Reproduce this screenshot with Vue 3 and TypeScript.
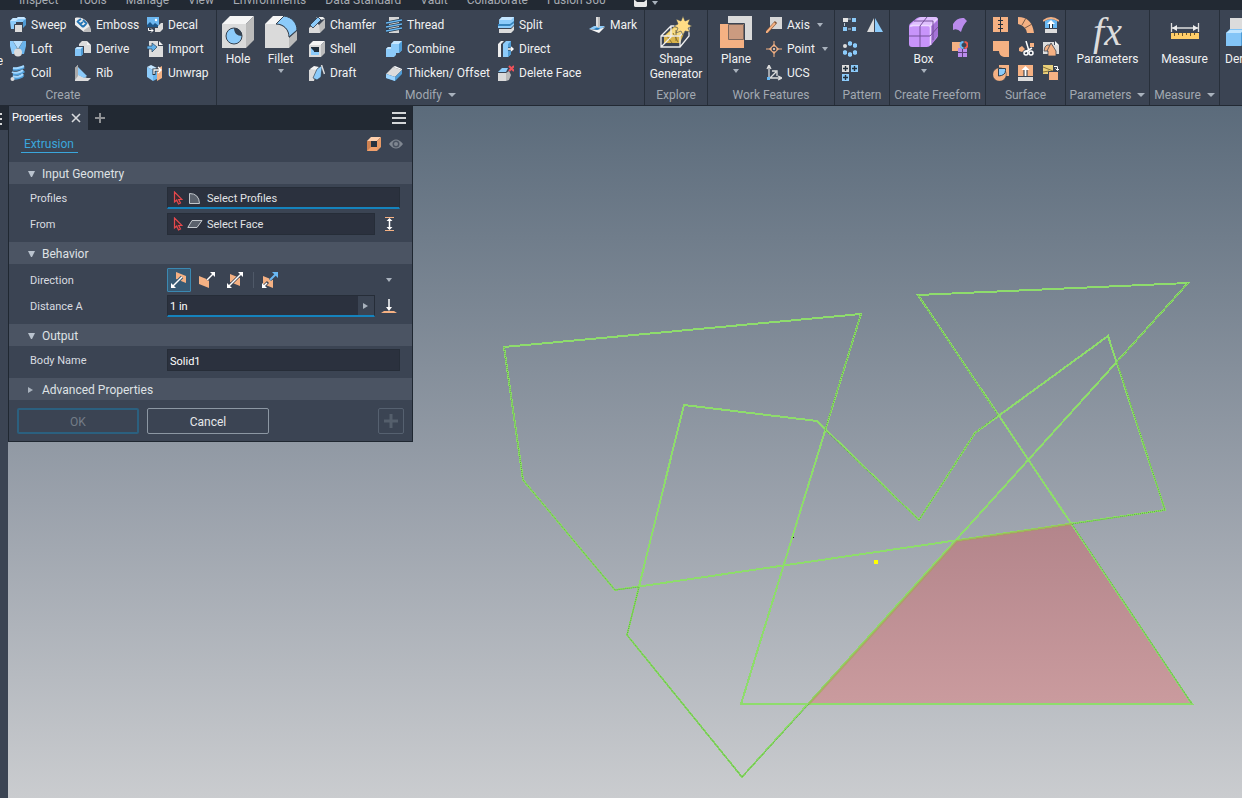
<script setup lang="ts">
import { ref } from 'vue'

interface Tool { icon: string; label?: string; caret?: boolean }

const tabs = ['Inspect', 'Tools', 'Manage', 'View', 'Environments', 'Data Standard', 'Vault', 'Collaborate', 'Fusion 360']

const createTools: Tool[][] = [
  [{ icon: 'sweep', label: 'Sweep' }, { icon: 'loft', label: 'Loft' }, { icon: 'coil', label: 'Coil' }],
  [{ icon: 'emboss', label: 'Emboss' }, { icon: 'derive', label: 'Derive' }, { icon: 'rib', label: 'Rib' }],
  [{ icon: 'decal', label: 'Decal' }, { icon: 'import', label: 'Import' }, { icon: 'unwrap', label: 'Unwrap' }],
]
const modifyTools: Tool[][] = [
  [{ icon: 'chamfer', label: 'Chamfer' }, { icon: 'shell', label: 'Shell' }, { icon: 'draft', label: 'Draft' }],
  [{ icon: 'thread', label: 'Thread' }, { icon: 'combine', label: 'Combine' }, { icon: 'thicken', label: 'Thicken/ Offset' }],
  [{ icon: 'split', label: 'Split' }, { icon: 'direct', label: 'Direct' }, { icon: 'deleteFace', label: 'Delete Face' }],
  [{ icon: 'mark', label: 'Mark' }],
]
const workTools: Tool[] = [
  { icon: 'axis', label: 'Axis', caret: true },
  { icon: 'point', label: 'Point', caret: true },
  { icon: 'ucs', label: 'UCS' },
]
const patternTools: string[][] = [['rectPattern', 'circPattern', 'sketchPattern'], ['mirror']]
const freeformTools = ['face', 'convert']
const surfaceTools: string[][] = [
  ['stitch', 'patch', 'sculpt'],
  ['ruled', 'trim', 'extend'],
  ['replace', 'repair', 'fitMesh'],
]
const directions = ['dirDefault', 'dirFlipped', 'dirSymmetric', 'dirAsymmetric']

const direction = ref('dirDefault')
const distance = ref('1 in')
const bodyName = ref('Solid1')

const icons: Record<string, string> = {
  sweep: '<path fill="#8ccbfa" d="M0 4 3 1h4l1-1h6l2 2v5h-3V5H6v7H1z"/><path fill="#c5e6ff" d="M0 4 3 1h4l1-1h6l2 2H8L6 4z"/><path fill="#4f9bd4" d="M13 4l3-2v6l-3 3z"/><path fill="#dcdcdc" stroke="#3b4453" d="M4.500 7.500h8v8h-8z"/>',
  loft: '<path fill="#8ccbfa" d="M0 0h3l4 7-3 6H2L0 5z"/><path fill="#6ab4ec" d="M16 0h-3L9 7l3 6h2l2-8z"/><path fill="#b9e0fd" d="M3 0h10L8 8z"/><circle cx="8" cy="11.500" r="4" fill="#dcdcdc"/>',
  coil: '<path fill="none" stroke="#4f9fda" stroke-width="3" d="M3 4c3 1 9-1 11-2M3 9c3 1 9-1 11-3M3 13c3 1 9-1 10-3"/><path fill="none" stroke="#a3d8ff" stroke-width="2" d="M3 3c3 1 9-1 11-2M2 7c3 2 9 0 11-2M3 11c3 2 9 0 10-2"/><circle cx="2.500" cy="14" r="2" fill="#dcdcdc"/>',
  emboss: '<path fill="#ececec" d="M0 8V1C8-1 15 5 16 15H9z"/><path fill="none" stroke="#2375b5" stroke-width="1.800" d="M2 4l6 6M3 4l3-2M5 7l3-2M8 10l3-3M8 3l4 4"/><path fill="#bcbcbc" d="M9 13l6-4 1 6H9z"/>',
  derive: '<path fill="#dcdcdc" d="M7 0h5v4h4v8H9V5H4V3z"/><path fill="#f4f4f4" d="M12 0l4 4h-4z"/><path fill="#83c5f7" d="M0 8l2-2h6v7l-2 2H0z"/><path fill="#c0e5ff" d="M0 8l2-2h6L6 8z"/><path fill="#4e9cd6" d="M6 8l2-2v7l-2 2z"/>',
  rib: '<path fill="#dcdcdc" d="M0 3l3-3v9l9 4h4l-3 3H0z"/><path fill="#3b4453" d="M4 4v6l6 3z"/><path fill="#8ccbfa" d="M3 2l9 9-3 2-6-3z"/><path fill="#aaa" d="M0 3l3-3v11l-3 4z"/>',
  decal: '<path fill="#6bb6ef" d="M0 0h12v10H0z"/><path fill="#1e5687" d="M0 8l3-3 3 3 2-2 4 3v1H0z"/><circle cx="9" cy="3" r="1.200" fill="#fff"/><path fill="#dcdcdc" d="M11 9l3-3h2v6l-3 3H8v-4h3z"/><path fill="none" stroke="#3b4453" stroke-width="3" d="M1.500 10.500v3H6"/><path fill="none" stroke="#fff" d="M1.500 11v2.500H6M4 11.500l2 2-2 2"/>',
  import: '<path fill="#dcdcdc" d="M2 0h9v5h5v11H2z"/><path fill="#f4f4f4" d="M12 0l4 4h-4z"/><path fill="#62b1ea" stroke="#28435a" stroke-width=".7" d="M0 5h5V2l5 4-5 5V8H0z"/>',
  unwrap: '<path fill="#f3b184" d="M10 4l5-3v12l-5 3z"/><path fill="#8ccbfa" d="M0 2l6 3v11l-6-4z"/><path fill="#6ab4ec" d="M6 5l4-1v10l-4 2z"/><path fill="#c5e6ff" d="M0 2l4-2 6 3-4 2z"/><path fill="none" stroke="#26303b" stroke-width="3" d="M7 10V5h6"/><path fill="none" stroke="#fff" stroke-width="1.300" d="M7 9V5h6M11 2l3 3-3 3"/>',
  hole: '<path fill="#dadada" d="M0 8h24v24H0z"/><path fill="#f5f5f5" d="M0 8l8-8h24l-8 8z"/><path fill="#bbb" d="M24 8l8-8v24l-8 8z"/><circle cx="12" cy="20" r="8" fill="#8ccbfa" stroke="#35414f"/><path fill="#35414f" d="M12 12a8 8 0 0 1 8 8c-5 0-8-3-8-8z"/>',
  fillet: '<path fill="#f5f5f5" d="M0 8l8-8h12l-6 8z"/><path fill="#dadada" d="M0 8h11c8 1 13 6 13 13v11H0z"/><path fill="#bbb" d="M24 22l8-7v9l-8 8z"/><path fill="#8ccbfa" stroke="#35414f" d="M11 8l8-8c8 1 13 7 13 14l-8 7c0-7-5-13-13-13z"/>',
  chamfer: '<path fill="#dadada" d="M0 11l7-6 4 4v7H0z"/><path fill="#bbb" d="M10 8l6-6v9l-5 5z"/><path fill="#eee" d="M7 0h7l2 2-5 1z"/><path fill="#8ccbfa" stroke="#273443" stroke-width=".8" d="M1 8l8-8 3 3-8 8z"/>',
  shell: '<path fill="#dadada" d="M0 4h12v12H0z"/><path fill="#f5f5f5" d="M0 4l4-4h12l-4 4z"/><path fill="#bbb" d="M12 4l4-4v12l-4 4z"/><path fill="#1f2d3a" d="M2 6h8v8H2z"/><path fill="#8ccbfa" d="M2 14V7l3 3v1h5v3z"/>',
  draft: '<path fill="#dadada" d="M0 5l5-3 3 2-3 12H0z"/><path fill="#f5f5f5" d="M1 4l4-3 5 1-2 3z"/><path fill="#8ccbfa" stroke="#26303b" stroke-width=".6" d="M8 4l4-3 1 1-1 10-4 3-4-2z"/><path stroke="#ddd" stroke-width="1.500" d="M12.500 0l3 9"/>',
  thread: '<path fill="#d5d5d5" d="M3 0h10v16H3z"/><path fill="none" stroke="#23384b" stroke-width="3" d="M0 6l16-3M0 10l16-3M0 14l16-3"/><path fill="none" stroke="#69b8f3" stroke-width="1.700" d="M0 6l16-3M0 10l16-3M0 14l16-3"/>',
  combine: '<path fill="#8ccbfa" d="M5 3l3-3h8v9l-3 3h-3v2l-2 2H0V8l2-2h3z"/><path fill="#c5e6ff" d="M5 3l3-3h8l-3 3zM0 8l2-2h3v2z"/><path fill="#4e9cd6" d="M13 3l3-3v9l-3 3z"/>',
  thicken: '<path fill="#dcdcdc" d="M0 9l7-7 9 3-7 7z"/><path fill="#fff" d="M7 2l2-1 7 3v1z"/><path fill="#4e9cd6" d="M0 9l9 3 7-7v4l-7 7-9-3z"/><path fill="#9dd5ff" d="M0 9l9 3v4l-9-3z"/>',
  split: '<path fill="#8ccbfa" d="M1 3l3-3h12v5l-3 3H1z"/><path fill="#c5e6ff" d="M1 3l3-3h12l-3 3z"/><path fill="#3583bc" d="M0 7h12l4-3v2l-3 3H0z"/><path fill="#8ccbfa" d="M0 9h12l4-3v2l-3 3H0z"/><path fill="#dcdcdc" d="M1 12h12l3-3v4l-3 3H1z"/>',
  direct: '<path fill="#eee" d="M0 3l3-3h3L3 3v13H0z"/><path fill="#8ccbfa" d="M5 3l3-3h5v13l-3 3H5z"/><path fill="#4e9cd6" d="M10 3l3-3v13l-3 3z"/><path fill="none" stroke="#293440" stroke-width="3" d="M10 8h5"/><path fill="none" stroke="#fff" stroke-width="1.400" d="M10 8h5M13 6l2 2-2 2"/>',
  deleteFace: '<path fill="#dadada" d="M0 8h8v8H0z"/><path fill="#8ccbfa" d="M0 7l4-4h6L8 7z"/><path fill="#bbb" d="M8 8l3-2 2 4-2 5-3 1z"/><path stroke="#f0525a" stroke-width="2" d="M11 1l5 5M16 1l-5 5"/>',
  mark: '<path fill="#8ccbfa" d="M0 12l5-3h11l-5 4z"/><path fill="#f5f5f5" d="M0 12l7 1 4-1 5-2-6 6z"/><path fill="#257ab9" d="M5 12l4-2 2 2-3 1z"/><path fill="#ddd" d="M7 0h4v9l-2 2-2-2z"/><path fill="#bbb" d="M9 0h2v9l-2 2z"/>',
  shape: '<path fill="#d9b44b" d="M4 20l11-10h12l-7 17H4z"/><path fill="#f6db82" d="M5 20l9-8h11l-5 7z"/><path fill="none" stroke="#8a7130" d="M7 20l5 7M13 17l5 9M16 14v11"/><path fill="none" stroke="#eee" stroke-width="1.300" d="M1 20l10-10h18v10l-9 11H1zM1 20h19l9-10M20 20v11M11 10v11L1 31"/><path fill="#ffdd85" stroke="#3b4453" stroke-width=".6" d="M23 0l2 5 5-2-2 5 4 2-4 2 2 4-5-1-2 4-2-4-5 2 2-5-4-2 4-2-2-5 5 2z"/>',
  plane: '<path fill="#dadada" d="M8 0h24v24H8z"/><path fill="#f5b183" stroke="#3b4453" d="M-.500 7.500h25v25h-25z"/><path fill="#cb9b80" stroke="#7d685e" d="M8.500 8.500h15v15h-15z"/>',
  axis: '<path fill="#d7d7d7" d="M4 0h12v12H4z"/><path stroke="#7d5133" stroke-width="3" d="M0 16L10 5"/><path stroke="#f5b183" stroke-width="2" d="M0 16L9 6"/>',
  point: '<path stroke="#f5b183" d="M8 0v16M0 8h16"/><path fill="#f5b183" d="M8 3l5 5-5 5-5-5z"/><circle cx="8" cy="8" r="2.500" fill="#3b4453"/><circle cx="8" cy="8" r="1" fill="#ffe3cf"/>',
  ucs: '<path fill="none" stroke="#ddd" stroke-width="1.300" d="M3 13V1M1 4l2-4 2 4M3 13h12M12 11l4 2-4 2M4 13l6-6M6 6h5v5"/><path fill="#69b8f3" d="M1 12h3v3H1z"/>',
  rectPattern: '<path fill="#e5e5e5" d="M1 1h5v4H1z"/><path fill="#8ccbfa" d="M10 1h4v4h-4zM1 10h4v4H1zM10 10h4v4h-4z"/><path stroke="#b8c7d4" d="M6 2h3M2.500 6v3M6 12h3"/>',
  circPattern: '<path fill="#8ccbfa" d="M6 1l2-1 2 1v3L8 5 6 4zM11 3l2-1 2 1v3l-2 1-2-1zM11 10l2-1 2 1v3l-2 1-2-1zM6 12l2-1 2 1v3l-2 1-2-1zM1 10l2-1 2 1v3l-2 1-2-1z"/><circle cx="3" cy="5" r="2" fill="#ddd"/>',
  sketchPattern: '<path fill="#ddd" d="M0 0h7v7H0z"/><path fill="#8ccbfa" d="M9 0h7v7H9zM0 9h7v7H0z"/><path stroke="#23313e" stroke-width="1.400" d="M1 3.500h5M3.500 1v5M10 3.500h5M12.500 1v5M1 12.500h5M3.500 10v5"/>',
  mirror: '<path fill="#dcdcdc" d="M7 1v14H0z"/><path fill="#8ccbfa" d="M8 1v14h8z"/>',
  box: '<path fill="#c894fa" d="M1 10q0-2 3-4l5-4q2-1 4-1h14q3 0 3 3v15q0 2-2 4l-5 6q-2 2-4 2H4q-3 0-3-3z"/><path fill="#dfbfff" d="M2 9l9-7q1-1 3-1h13q2 0 3 2l-8 7H4z"/><path fill="#a673d8" d="M23 11l7-7v15l-7 10z"/><path fill="none" stroke="#ecd9ff" stroke-width="1.500" d="M2 10q1 0 3-.500h15q2 0 2.500 2V29M22 10l7-7"/><path fill="none" stroke="#75509a" d="M12 10v21M1 20h21l8-9M6 5h19v19M12 10l7-9"/>',
  face: '<path fill="#ba8bec" d="M1 7Q5 0 12 1l3 3Q11 8 9 15 5 11 1 13z"/>',
  convert: '<path fill="#f5b183" d="M0 1h9v9H0z"/><path fill="#ba8bec" d="M6 7h9v9H6z"/><path stroke="#583e75" d="M6 11.500h9M10.500 7v9"/><circle cx="12" cy="4" r="4" fill="#3b4453"/><path fill="none" stroke="#69b8f3" stroke-width="2" d="M11.500 7a3 3 0 0 1 0-6"/><path fill="none" stroke="#ed5a4c" stroke-width="2" d="M12.500 1a3 3 0 0 1 0 6"/>',
  stitch: '<path fill="#f5b183" d="M0 0h7v15H0zM8 0h7v15H8z"/><path stroke="#25303c" d="M7.500 0v15M5 3.500h5M5 7.500h5M5 11.500h5"/>',
  ruled: '<path fill="#f5b183" d="M0 0Q14 0 16 16H9Q8 9 0 7z"/><path stroke="#7d5d49" d="M8 1L4 8M14 7L7 11"/>',
  replace: '<path fill="#69b8f3" d="M2 4Q8 0 14 4v7H2z"/><path fill="none" stroke="#f5b183" stroke-width="1.800" d="M0 4Q8-2 16 4"/><path fill="none" stroke="#25303c" stroke-width="4" d="M8 11V6"/><path fill="#fff" d="M8 3l4 4H9v4H7V7H4z"/><path fill="#ddd" d="M2 12h12v4H2z"/>',
  patch: '<path fill="#f5b183" d="M0 0h16v16h-5Q6 15 6 10H0z"/>',
  trim: '<path fill="#f5b183" d="M12 2h4v4h-4zM1 7l3-2 3 3-3 3-3-1z"/><path stroke="#fff" stroke-width="1.500" d="M8 0l3 10M14 7l-7 4"/><circle cx="8" cy="12" r="2" fill="none" stroke="#fff" stroke-width="1.500"/><circle cx="13" cy="12" r="2" fill="none" stroke="#fff" stroke-width="1.500"/>',
  repair: '<path fill="#ddd" d="M0 1h11v3h5v9H0z"/><path fill="#f6f6f6" d="M12 0l4 4h-4z"/><path fill="#f5b183" stroke="#3b4453" stroke-width=".8" d="M4 4h5v6H1l1-4z"/><path fill="#f5b183" stroke="#3b4453" stroke-width=".8" d="M4 10l4-8 5 8v5H5v-5z"/>',
  sculpt: '<path fill="#f5b183" d="M6 0h10v11H6z"/><circle cx="6.500" cy="9.500" r="6.800" fill="#f5b183" stroke="#3b4453" stroke-width=".6"/><path fill="#8ccbfa" stroke="#31414f" d="M5.500 3.500h7v2q0 5-7 5.500z"/>',
  extend: '<path fill="#f5b183" d="M0 0h15v11H0z"/><path fill="none" stroke="#25303c" stroke-width="4" d="M7.500 11V4"/><path fill="#fff" d="M7.500 1l4 4h-3v6h-2V5h-3z"/><path fill="#ddd" d="M0 12h15v4H0z"/>',
  fitMesh: '<path fill="#e9cf79" d="M0 0h10v9H0z"/><path stroke="#84713b" d="M0 2l10 4M0 7l6-1"/><path fill="#f5b183" stroke="#3b4453" d="M5.500 6.500h10v9h-10z"/><path fill="none" stroke="#fff" d="M11 1.500h3.500V5M12.500 3.500l2 2 2-2"/>',
  measure: '<path stroke="#ddd" stroke-width="1.300" d="M2.500 7v9M29.500 7v9M3 12h26"/><path fill="#eee" d="M3 12l5-3v6zM29 12l-5-3v6z"/><path fill="#ffcd68" d="M2 17h28v6H2z"/><path stroke="#70572b" d="M5.500 17v3M9.500 17v2M13.500 17v3M17.500 17v2M21.500 17v3M25.500 17v2"/>',
  deriveBig: '<path fill="#dcdcdc" d="M4 2h20l5 5v18H4z"/><path fill="#3b4453" d="M0 13h18v18H0z"/><path fill="#83c5f7" d="M0 17l4-4h14v13l-3 4H0z"/><path fill="#c0e5ff" d="M0 17l4-3h14l-3 3z"/><path fill="#4e9cd6" d="M15 17l3-3v12l-3 4z"/>',
  surfaceMode: '<path fill="#f0a06c" d="M0 4h10v10H0z"/><path fill="#ffd0ad" d="M0 4l4-4h10l-4 4z"/><path fill="#e89a66" d="M10 4l4-4v10l-4 4z"/><path fill="#273340" d="M4 4h6v6H4z"/><path fill="#ce8150" d="M0 4h4v6l-4 4z"/>',
  eye: '<path fill="#808791" d="M0 7q7-9 14 0-7 9-14 0z"/><circle cx="7" cy="7" r="3.500" fill="#4a5361"/><circle cx="7" cy="7" r="2" fill="#808791"/>',
  cursor: '<path fill="#3b2b32" stroke="#e5484c" stroke-width="1.200" d="M1.500 1v10l2.200-2 1.800 4 2-1-1.800-3.500H9z"/>',
  profile: '<path fill="#5a616c" stroke="#c3c8cd" d="M1.500 1.500Q11 1.500 11.500 11.500h-10z"/>',
  plane2: '<path fill="#5a616c" stroke="#c3c8cd" d="M5 2.500h10l-5 7H.800z"/>',
  between: '<path stroke="#f5b183" d="M0 .500h9M0 13.500h9"/><path stroke="#fff" stroke-width="1.500" d="M4.500 2v10"/><path fill="#fff" d="M4.500 1l3 3h-6zM4.500 13l3-3h-6z"/>',
  toFace: '<path fill="#f5b183" d="M3 12h10l3 2H0z"/><path stroke="#fff" stroke-width="1.500" d="M8 0v10"/><path fill="#fff" d="M8 12L5 8h6z"/>',
  dirDefault: '<path fill="#f5b183" d="M5 0l10 4v7L5 7z"/><path stroke="#375a74" stroke-width="3.500" d="M2 14l9-9"/><path stroke="#fff" stroke-width="1.500" d="M2 14l9-9"/><path fill="#fff" d="M0 16v-5l5 5z"/>',
  dirFlipped: '<path fill="#f5b183" d="M0 4l10 4v8L0 12z"/><path stroke="#3b4453" stroke-width="3" d="M8 8l6-6"/><path stroke="#fff" stroke-width="1.500" d="M8 8l6-6"/><path fill="#fff" d="M16 0v5l-5-5z"/>',
  dirSymmetric: '<path fill="#f5b183" d="M3 2l10 4v8L3 10z"/><path stroke="#3b4453" stroke-width="3" d="M2 14L14 2"/><path stroke="#fff" stroke-width="1.500" d="M2 14L14 2"/><path fill="#fff" d="M0 16v-5l5 5zM16 0v5l-5-5z"/>',
  dirAsymmetric: '<path fill="#f5b183" d="M1 4l10 4v8L1 12z"/><path stroke="#3b4453" stroke-width="3" d="M2 14l4-4M8 8l6-6"/><path stroke="#69b8f3" stroke-width="2" d="M8 8l6-6"/><path stroke="#fff" stroke-width="1.500" d="M2 14l3-3"/><path fill="#fff" d="M0 16v-5l5 5z"/><path fill="#69b8f3" d="M16 0v6l-6-6z"/>',
}
</script>

<template>
  <div class="app">
    <nav class="tabs" aria-label="Ribbon tabs">
      <a v-for="t in tabs" :key="t" href="#">{{ t }}</a>
      <button class="tab-media" aria-label="Ribbon display"><i class="media"></i><i class="caret"></i></button>
    </nav>

    <header class="ribbon">
      <section class="group create">
        <div class="tools">
          <button class="cut">e</button>
          <div v-for="(col, i) in createTools" :key="i" class="col">
            <button v-for="t in col" :key="t.icon" class="tool">
              <svg viewBox="0 0 16 16" v-html="icons[t.icon]"></svg>{{ t.label }}
            </button>
          </div>
        </div>
        <h2>Create</h2>
      </section>

      <section class="group modify">
        <div class="tools">
          <button class="big"><svg viewBox="0 0 32 32" v-html="icons.hole"></svg>Hole</button>
          <button class="big"><svg viewBox="0 0 32 32" v-html="icons.fillet"></svg>Fillet<i class="caret"></i></button>
          <div v-for="(col, i) in modifyTools" :key="i" class="col">
            <button v-for="t in col" :key="t.icon" class="tool">
              <svg viewBox="0 0 16 16" v-html="icons[t.icon]"></svg>{{ t.label }}
            </button>
          </div>
        </div>
        <h2>Modify <i class="caret wide"></i></h2>
      </section>

      <section class="group explore">
        <div class="tools">
          <button class="big"><svg viewBox="0 0 32 32" v-html="icons.shape"></svg>Shape<br>Generator</button>
        </div>
        <h2>Explore</h2>
      </section>

      <section class="group work">
        <div class="tools">
          <button class="big"><svg viewBox="0 0 32 32" v-html="icons.plane"></svg>Plane<i class="caret"></i></button>
          <div class="col">
            <button v-for="t in workTools" :key="t.icon" class="tool">
              <svg viewBox="0 0 16 16" v-html="icons[t.icon]"></svg>{{ t.label }}<i v-if="t.caret" class="caret"></i>
            </button>
          </div>
        </div>
        <h2>Work Features</h2>
      </section>

      <section class="group pattern">
        <div class="tools">
          <div v-for="(col, i) in patternTools" :key="i" class="col">
            <button v-for="n in col" :key="n" class="tool" :aria-label="n">
              <svg viewBox="0 0 16 16" v-html="icons[n]"></svg>
            </button>
          </div>
        </div>
        <h2>Pattern</h2>
      </section>

      <section class="group freeform">
        <div class="tools">
          <button class="big"><svg viewBox="0 0 32 32" v-html="icons.box"></svg>Box<i class="caret"></i></button>
          <div class="col">
            <button v-for="n in freeformTools" :key="n" class="tool" :aria-label="n">
              <svg viewBox="0 0 16 16" v-html="icons[n]"></svg>
            </button>
          </div>
        </div>
        <h2>Create Freeform</h2>
      </section>

      <section class="group surface">
        <div class="tools">
          <div v-for="(col, i) in surfaceTools" :key="i" class="col">
            <button v-for="n in col" :key="n" class="tool" :aria-label="n">
              <svg viewBox="0 0 16 16" v-html="icons[n]"></svg>
            </button>
          </div>
        </div>
        <h2>Surface</h2>
      </section>

      <section class="group single">
        <div class="tools"><button class="big"><span class="fx">fx</span>Parameters</button></div>
        <h2>Parameters <i class="caret wide"></i></h2>
      </section>

      <section class="group single">
        <div class="tools"><button class="big"><svg viewBox="0 0 32 32" v-html="icons.measure"></svg>Measure</button></div>
        <h2>Measure <i class="caret wide"></i></h2>
      </section>

      <section class="group last">
        <div class="tools"><button class="big"><svg viewBox="0 0 32 32" v-html="icons.deriveBig"></svg>Derive</button></div>
      </section>
    </header>

    <main class="workspace">
      <aside class="strip"><div class="strip-head"><i class="dots"></i></div></aside>
      <div class="canvas">
        <svg class="sketch" viewBox="8 106 1234 692" preserveAspectRatio="xMinYMin slice" role="img" aria-label="Sketch profile">
          <defs>
            <linearGradient id="region" x1="0" y1="0" x2="0" y2="1">
              <stop offset="0" stop-color="#b3858b" /><stop offset="1" stop-color="#ca9b9e" />
            </linearGradient>
          </defs>
          <path class="region" d="M957 541 1072 524 1192 704H809z" />
          <path class="line" d="M504 347 861 314 741 704H1192L918 295 1188 283 742 777 627 635 684 405 817 421 919 520 975 433 1108 336 1165 510 615 590 523 480z" />
          <path class="outer" d="M861 314 825 430 919 520 975 433 998 415 918 295M1188 283 1117 362 1165 510 1072 524 1192 704M809 704 742 777 627 635 639 587 615 590 523 480 504 347" />
          <path class="edge" d="M809 704 957 541 1072 524" />
          <path fill="#ff0" d="M874 560h4v4h-4z" />
          <path fill="#111" d="M793 537h1v1h-1z" />
        </svg>

        <form class="props" @submit.prevent>
          <div class="props-head">
            <button type="button" class="props-tab">Properties
              <svg width="10" height="10" viewBox="0 0 10 10"><path d="M1 1l8 8M9 1l-8 8" stroke="#d8dadd" stroke-width="1.600" /></svg>
            </button>
            <button type="button" class="plain add" aria-label="Add tab"><svg width="10" height="10" viewBox="0 0 10 10"><path d="M5 0v10M0 5h10" stroke="#8f9194" stroke-width="2" /></svg></button>
            <button type="button" class="plain menu" aria-label="Menu"><svg width="14" height="12" viewBox="0 0 14 12"><path d="M0 1h14M0 6h14M0 11h14" stroke="#d4d6d8" stroke-width="2" /></svg></button>
          </div>
          <div class="crumb">
            <a href="#">Extrusion</a>
            <button type="button" class="plain" aria-label="Surface mode"><svg width="14" height="14" viewBox="0 0 14 14" v-html="icons.surfaceMode"></svg></button>
            <button type="button" class="plain" aria-label="Preview"><svg width="14" height="14" viewBox="0 0 14 14" v-html="icons.eye"></svg></button>
          </div>

          <h3><i class="tri"></i>Input Geometry</h3>
          <div class="rows">
            <div class="row">
              <label for="profiles">Profiles</label>
              <button id="profiles" type="button" class="field pick active wide">
                <svg width="10" height="14" viewBox="0 0 10 14" v-html="icons.cursor"></svg>
                <svg width="16" height="12" viewBox="-1 0 16 12" v-html="icons.profile"></svg>Select Profiles
              </button>
            </div>
            <div class="row">
              <label for="from">From</label>
              <button id="from" type="button" class="field pick">
                <svg width="10" height="14" viewBox="0 0 10 14" v-html="icons.cursor"></svg>
                <svg width="16" height="12" viewBox="0 0 16 12" v-html="icons.plane2"></svg>Select Face
              </button>
              <button type="button" class="plain" aria-label="Between"><svg width="9" height="14" viewBox="0 0 9 14" v-html="icons.between"></svg></button>
            </div>
          </div>

          <h3><i class="tri"></i>Behavior</h3>
          <div class="rows behavior">
            <div class="row">
              <span class="name">Direction</span>
              <div class="dirs">
                <button v-for="d in directions" :key="d" type="button" :class="['dir', { on: direction === d }]" :aria-pressed="direction === d" :aria-label="d" @click="direction = d">
                  <svg width="16" height="16" viewBox="0 0 16 16" v-html="icons[d]"></svg>
                </button>
              </div>
              <button type="button" class="plain" aria-label="More"><i class="caret"></i></button>
            </div>
            <div class="row">
              <label for="distance">Distance A</label>
              <div class="field active combo">
                <input id="distance" v-model="distance" type="text">
                <button type="button" aria-label="Distance options"><i class="tri side"></i></button>
              </div>
              <button type="button" class="plain" aria-label="To"><svg width="16" height="14" viewBox="0 0 16 14" v-html="icons.toFace"></svg></button>
            </div>
          </div>

          <h3><i class="tri"></i>Output</h3>
          <div class="rows">
            <div class="row">
              <label for="body">Body Name</label>
              <input id="body" v-model="bodyName" class="field wide" type="text">
            </div>
          </div>

          <h3><i class="tri side"></i>Advanced Properties</h3>
          <div class="actions">
            <button type="submit" class="ok" disabled>OK</button>
            <button type="button" class="cancel">Cancel</button>
            <button type="button" class="apply" disabled aria-label="Apply"><svg width="16" height="16" viewBox="0 0 16 16"><path d="M8 1v14M1 8h14" stroke="#555f6c" stroke-width="3" /></svg></button>
          </div>
        </form>
      </div>
    </main>
  </div>
</template>

<style>
body { margin: 0; }
</style>

<style scoped>
.app {
  min-height: 100vh;
  display: flex;
  flex-direction: column;
  overflow: hidden;
  background: #3b4453;
  color: #f0f1f2;
  font: 12px/16px Roboto, "Liberation Sans", sans-serif;
}
.app * { box-sizing: border-box; }
button, input { font: inherit; color: inherit; background: none; border: 0; padding: 0; margin: 0; }
svg { display: block; flex: none; }

.tabs {
  height: 10px;
  padding: 0 0 2px 19px;
  display: flex;
  align-items: flex-end;
  gap: 19px;
  overflow: hidden;
  background: #222933;
}
.tabs a { color: #a6abb2; text-decoration: none; white-space: nowrap; }
.tab-media { display: flex; align-items: center; gap: 5px; margin-left: 9px; height: 10px; }
.media { width: 13px; height: 8px; border-radius: 2px; background: #e8e8e8; border: 3px solid #e8e8e8; border-top-color: #222933; }

.caret { width: 0; height: 0; flex: none; display: block; border: 3px solid transparent; border-top: 4px solid #a9b2bd; border-bottom: 0; }
.caret.wide { border-width: 4px; border-bottom: 0; }

.ribbon {
  display: flex;
  overflow: hidden;
  border-bottom: 1px solid #222933;
  background: #3b4453;
}
.group { flex: none; display: flex; flex-direction: column; border-right: 1px solid #272f3a; padding-bottom: 2px; }
.tools { height: 77px; padding-top: 3px; display: flex; }
.group h2 {
  margin: 0;
  font-size: 12px;
  font-weight: 400;
  line-height: 16px;
  color: #a2a9b1;
  display: flex;
  align-items: center;
  justify-content: center;
  gap: 6px;
  white-space: nowrap;
}
.col { display: flex; flex-direction: column; }
.tool { height: 24px; display: flex; align-items: center; gap: 5px; white-space: nowrap; text-align: left; }
.tool svg { width: 16px; height: 16px; }
.tool .caret { margin-left: 2px; }
.big { display: flex; flex-direction: column; align-items: center; align-self: flex-start; padding-top: 3px; line-height: 15px; white-space: nowrap; }
.big svg { width: 32px; height: 32px; margin-bottom: 4px; }
.big .caret { margin-top: 2px; }

.create { width: 217px; }
.create .tools { display: grid; grid-template-columns: 10px 65px 72px 1fr; }
.create h2 { padding-right: 90px; }
.cut { width: 3px; display: flex; justify-content: flex-end; align-self: center; overflow: hidden; padding-top: 22px; }
.modify { width: 428px; }
.modify .tools { display: grid; grid-template-columns: 42px 43px 78px 112px 91px 1fr; }
.modify .tools > .col:nth-child(n+3) { padding-left: 7px; }
.modify .tools > .col:nth-child(n+4) { padding-left: 6px; }
.explore { width: 63px; }
.explore .tools, .single .tools { justify-content: center; }
.work { width: 127px; }
.work .tools { display: grid; grid-template-columns: 56px 1fr; column-gap: 2px; }
.pattern { width: 55px; }
.pattern .tools { gap: 9px; padding-left: 7px; }
.freeform { width: 96px; }
.freeform .tools { display: grid; grid-template-columns: 57px 1fr; padding-left: 5px; }
.surface { width: 80px; }
.surface .tools { gap: 9px; padding-left: 7px; }
.single { width: 84px; }
.single + .single { width: 70px; }
.last { padding-left: 5px; border-right: 0; }
.fx { height: 36px; font: italic 40px/32px "Liberation Serif", serif; color: #dcdcdc; }

.workspace { flex: 1; display: flex; }
.strip { width: 8px; flex: none; background: #3b4453; }
.strip-head { height: 24px; padding-top: 7px; background: #222933; }
.dots { display: block; width: 2px; height: 12px; background: repeating-linear-gradient(#d4d6d8 0 2px, #222933 2px 5px); }
.canvas {
  flex: 1;
  position: relative;
  overflow: hidden;
  background: linear-gradient(#5b6b7b, #9aa1ab 57%, #cacccf);
}
.sketch { position: absolute; inset: 0; width: 100%; height: 100%; }
.region { fill: url(#region); }
.line, .outer, .edge { fill: none; stroke-width: 2; stroke: #8edc6c; shape-rendering: crispEdges; }
.outer { stroke: #4f9138; stroke-width: 1; stroke-dasharray: 1 1; opacity: .8; shape-rendering: auto; }
.edge { stroke: #a9a34f; opacity: .6; shape-rendering: auto; }

.props {
  position: absolute;
  top: 0;
  left: 0;
  width: 405px;
  background: #3b4453;
  border: 1px solid #1f2731;
  border-top: 0;
  color: #d9dce0;
}
.plain { display: flex; align-items: center; justify-content: center; }
.props-head { height: 24px; display: flex; background: #222933; }
.props-tab { width: 79px; display: flex; align-items: center; gap: 8px; padding-left: 3px; background: #3b4453; color: #fff; font-size: 11px; }
.add { width: 24px; }
.menu { margin-left: auto; width: 26px; }
.crumb { height: 32px; padding: 0 9px 4px 12px; display: flex; align-items: center; gap: 8px; }
.crumb a { color: #3aa6dc; text-decoration: none; border-bottom: 1px solid #3aa6dc; padding: 0 4px 0 3px; margin-right: auto; }
.props h3 {
  margin: 0;
  height: 22px;
  padding: 2px 0 0 19px;
  display: flex;
  align-items: center;
  gap: 7px;
  background: #4b5463;
  color: #dfe2e5;
  font-size: 12px;
  font-weight: 400;
}
.tri { width: 7px; border: 3px solid transparent; border-top: 6px solid #bac3ce; border-bottom: 0; }
.tri.side { width: 6px; border: 3px solid transparent; border-left: 5px solid #a9b2bd; border-right: 0; margin-right: 1px; }
.rows { padding: 1px 0 5px 21px; font-size: 11px; }
.rows.behavior { padding-top: 3px; }
.row { height: 26px; display: grid; grid-template-columns: 137px 1fr 37px; align-items: center; }
.row > .plain { margin-right: 9px; }
.row label, .row .name { padding-top: 2px; }
.field { height: 22px; min-width: 0; width: 100%; background: #2b313e; border: 1px solid #262d38; padding: 2px 2px 0; color: #fff; }
.field.wide { grid-column: 2 / 4; width: auto; margin-right: 12px; }
.field.active { border-bottom: 2px solid #1583bd; }
.pick { display: flex; align-items: center; gap: 4px; padding-left: 5px; color: #e0e2e5; }
.pick svg { margin-top: -2px; }
.combo { display: flex; padding: 0 0 0 2px; }
.combo input { flex: 1; min-width: 0; padding-top: 2px; }
.combo button { width: 16px; background: #3b4453; display: flex; align-items: center; justify-content: center; }
.dirs { display: flex; gap: 4px; }
.dir { width: 24px; height: 24px; display: flex; align-items: center; justify-content: center; border: 1px solid transparent; border-radius: 1px; }
.dir.on { background: #375a74; border-color: #3b89b2; }
.dir:last-child { margin-left: 7px; position: relative; }
.dir:last-child::before { content: ""; position: absolute; left: -6px; top: 3px; width: 1px; height: 16px; background: #4f5968; }
.actions { padding: 8px 8px 7px; display: flex; gap: 8px; }
.actions button { height: 26px; padding-top: 1px; border: 1px solid #8c97a3; border-radius: 2px; }
.actions .ok { width: 122px; color: #747c87; border: 2px solid #2b607f; }
.actions .cancel { width: 122px; color: #e6e8ea; }
.actions .apply { width: 26px; margin-left: auto; padding: 0; border-color: #566170; display: flex; align-items: center; justify-content: center; }
</style>
